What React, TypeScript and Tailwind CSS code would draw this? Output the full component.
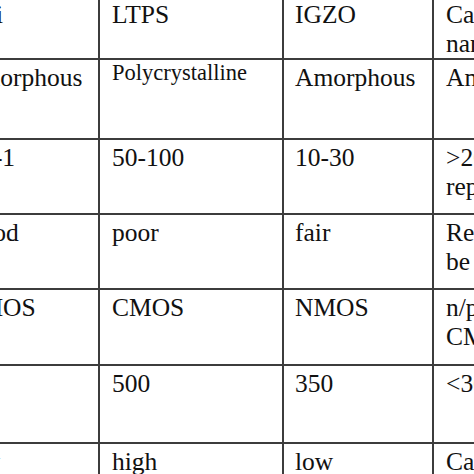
import React from 'react';

// rows of the comparison table (first column is partly cut off by the crop)
const rows: { h: string; cells: React.ReactNode[] }[] = [
  { h: 'h-[61px]', cells: ['a-Si', 'LTPS', 'IGZO', <>Carbon<br />nanotube</>] },
  { h: 'h-[78px]', cells: ['Amorphous', 'Polycrystalline', 'Amorphous', 'Amorphous'] },
  { h: 'h-[73px]', cells: ['0.5-1', '50-100', '10-30', <>&gt;20<br />reported</>] },
  { h: 'h-[73px]', cells: ['Good', 'poor', 'fair', <>Remains to<br />be seen</>] },
  { h: 'h-[74px]', cells: ['NMOS', 'CMOS', 'NMOS', <>n/p type<br />CMOS</>] },
  { h: 'h-[76px]', cells: ['300', '500', '350', '<300'] },
  { h: 'h-[60px]', cells: ['low', 'high', 'low', 'Can be low'] },
];

export default function App() {
  return (
    <div className="w-[474px] h-[474px] overflow-hidden bg-white">
      <div
        className="-ml-[50px] -mt-[3px] grid grid-cols-[148px_182px_148px_170px] gap-[2px] bg-[#3c3c3c] w-max text-[25.5px] leading-[29px] text-[#111]"
        style={{ fontFamily: '"Liberation Serif", "Times New Roman", serif' }}
      >
        {rows.map((row, ri) =>
          row.cells.map((c, ci) => {
            const small = c === 'Polycrystalline';
            return (
              <div
                key={`${ri}-${ci}`}
                className={`bg-white ${row.h} ${ci === 2 ? 'pl-[11px]' : 'pl-3'} ${small ? 'pt-0 text-[22.5px] leading-[25px]' : 'pt-[3px]'}`}
              >
                {c}
              </div>
            );
          })
        )}
      </div>
    </div>
  );
}
